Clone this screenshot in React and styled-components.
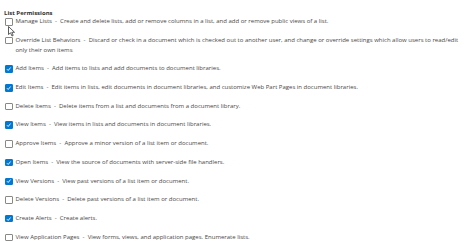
import React from 'react'
import styled, { createGlobalStyle } from 'styled-components'

const GlobalStyle = createGlobalStyle`
    html, body {
        margin: 0;
        padding: 0;
        background: #ffffff;
    }
    body {
        font-family: 'Open Sans', 'Noto Sans', sans-serif;
    }
`

const Page = styled.div`
    position: relative;
    width: 474px;
    height: 242px;
    padding: 9px 0 0 4px;
    box-sizing: border-box;
    overflow: hidden;
`

const Heading = styled.h3`
    margin: 0 0 -1px 0;
    font-size: 6px;
    line-height: 8px;
    font-weight: 700;
    color: #323130;
`

const List = styled.div`
    display: flex;
    flex-direction: column;
    gap: 8.7px;
`

const Row = styled.label`
    display: flex;
    flex-direction: row;
    align-items: flex-start;
    padding-right: 4px;
`

const Box = styled.span`
    flex: none;
    width: 5.5px;
    height: 5.5px;
    margin: 2px 3px 0 1px;
    border: 1px solid ${p => (p.checked ? '#0078d4' : '#8a8886')};
    background: ${p => (p.checked ? '#0078d4' : '#ffffff')};
    border-radius: 1px;
    display: flex;
    align-items: center;
    justify-content: center;
`

const Text = styled.span`
    font-size: 6px;
    line-height: 10px;
    color: #4a4846;
`

const Cursor = styled.svg`
    position: absolute;
    left: 8px;
    top: 26px;
`

const items = [
    ['Manage Lists', 'Create and delete lists, add or remove columns in a list, and add or remove public views of a list.', false],
    ['Override List Behaviors', 'Discard or check in a document which is checked out to another user, and change or override settings which allow users to read/edit only their own items', false],
    ['Add Items', 'Add items to lists and add documents to document libraries.', true],
    ['Edit Items', 'Edit items in lists, edit documents in document libraries, and customize Web Part Pages in document libraries.', true],
    ['Delete Items', 'Delete items from a list and documents from a document library.', false],
    ['View Items', 'View items in lists and documents in document libraries.', true],
    ['Approve Items', 'Approve a minor version of a list item or document.', false],
    ['Open Items', 'View the source of documents with server-side file handlers.', true],
    ['View Versions', 'View past versions of a list item or document.', true],
    ['Delete Versions', 'Delete past versions of a list item or document.', false],
    ['Create Alerts', 'Create alerts.', true],
    ['View Application Pages', 'View forms, views, and application pages. Enumerate lists.', false],
]

const Check = () => (
    <svg width="6" height="6" viewBox="0 0 6 6">
        <path d="M1 3.2 L2.4 4.6 L5 1.4" fill="none" stroke="#fff" strokeWidth="1" />
    </svg>
)

export default function App() {
    return <Page>
        <GlobalStyle />
        <Heading>List Permissions</Heading>
        <List>
            {items.map(([name, desc, checked]) => (
                <Row key={name}>
                    <Box checked={checked}>{checked && <Check />}</Box>
                    <Text>{name}{'\u00a0 - \u00a0'}{desc}</Text>
                </Row>
            ))}
        </List>
        <Cursor width="8" height="11" viewBox="0 0 8 11">
            <path d="M0.5 0.5 L0.5 8.5 L2.5 6.8 L4 10 L5.2 9.4 L3.8 6.3 L6.5 6.3 Z" fill="#fff" stroke="#333" strokeWidth="0.8" />
        </Cursor>
    </Page>
}
